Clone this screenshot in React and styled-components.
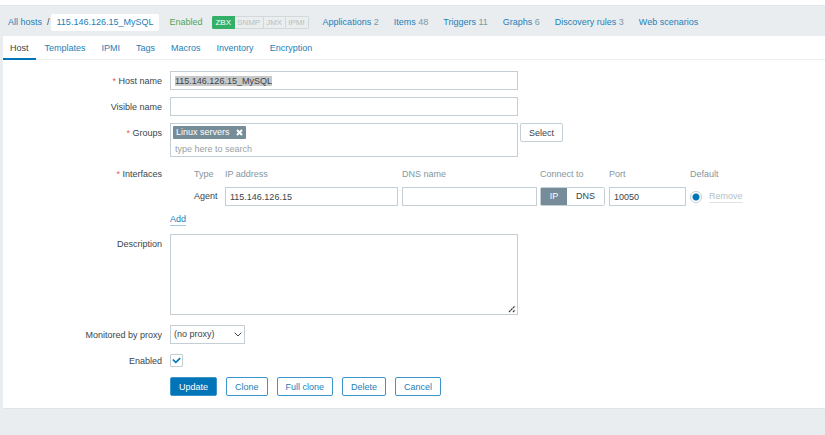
import { useEffect, useRef, useState } from "react";
import styled, { createGlobalStyle } from "styled-components";

const navLinks = [
  { name: "Applications", count: 2 },
  { name: "Items", count: 48 },
  { name: "Triggers", count: 11 },
  { name: "Graphs", count: 6 },
  { name: "Discovery rules", count: 3 },
  { name: "Web scenarios" },
];
const agents = ["ZBX", "SNMP", "JMX", "IPMI"];
const tabs = [
  "Host",
  "Templates",
  "IPMI",
  "Tags",
  "Macros",
  "Inventory",
  "Encryption",
];

const HostHeader = () => {
  return (
    <Header>
      <Link href="#hosts">All hosts</Link>
      <Slash>/</Slash>
      <CurrentHost href="#host">115.146.126.15_MySQL</CurrentHost>
      <HostStatus>Enabled</HostStatus>
      <Agents>
        {agents.map((agent) => (
          <Agent key={agent} $active={agent === "ZBX"}>
            {agent}
          </Agent>
        ))}
      </Agents>
      <HeaderNav>
        {navLinks.map((item) => (
          <span key={item.name}>
            <Link href="#nav">{item.name}</Link>
            {item.count && <Count> {item.count}</Count>}
          </span>
        ))}
      </HeaderNav>
    </Header>
  );
};

const Interfaces = () => {
  const [connect, setConnect] = useState("IP");
  return (
    <div>
      <InterfaceTable>
        <thead>
          <tr>
            <Th $width={31}>Type</Th>
            <Th $width={177}>IP address</Th>
            <Th $width={138}>DNS name</Th>
            <Th $width={69}>Connect to</Th>
            <Th $width={81}>Port</Th>
            <Th $width={60}>Default</Th>
          </tr>
        </thead>
        <tbody>
          <tr>
            <td>Agent</td>
            <td>
              <Input
                $width={173}
                aria-label="IP address"
                defaultValue="115.146.126.15"
              />
            </td>
            <td>
              <Input $width={135} aria-label="DNS name" />
            </td>
            <td>
              <Segments>
                {["IP", "DNS"].map((type) => (
                  <Segment key={type} $active={connect === type}>
                    <input
                      type="radio"
                      name="connect"
                      checked={connect === type}
                      onChange={() => setConnect(type)}
                    />
                    {type}
                  </Segment>
                ))}
              </Segments>
            </td>
            <td>
              <Input $width={77} aria-label="Port" defaultValue="10050" />
            </td>
            <td>
              <DefaultCell>
                <Radio
                  type="radio"
                  name="default"
                  aria-label="Default"
                  defaultChecked
                />
                <LinkButton type="button" disabled>
                  Remove
                </LinkButton>
              </DefaultCell>
            </td>
          </tr>
        </tbody>
      </InterfaceTable>
      <AddRow>
        <LinkButton type="button">Add</LinkButton>
      </AddRow>
    </div>
  );
};

const HostForm = () => {
  const hostName = useRef(null);
  useEffect(() => {
    hostName.current.focus();
    hostName.current.select();
  }, []);

  return (
    <Form onSubmit={(e) => e.preventDefault()}>
      <Label htmlFor="host" $required>
        Host name
      </Label>
      <Input id="host" ref={hostName} defaultValue="115.146.126.15_MySQL" />

      <Label htmlFor="visible">Visible name</Label>
      <Input id="visible" />

      <Label htmlFor="groups" $required>
        Groups
      </Label>
      <GroupsRow>
        <MultiSelect>
          <Chip>
            Linux servers
            <button type="button" aria-label="Remove Linux servers">
              <svg width="7" height="7" viewBox="0 0 7 7">
                <path d="M1 1L6 6M6 1L1 6" stroke="#fff" strokeWidth="2" />
              </svg>
            </button>
          </Chip>
          <input id="groups" placeholder="type here to search" />
        </MultiSelect>
        <Button type="button" $variant="grey">
          Select
        </Button>
      </GroupsRow>

      <Label as="div" $required>
        Interfaces
      </Label>
      <Interfaces />

      <Label htmlFor="description">Description</Label>
      <TextAreaWrap>
        <textarea id="description" />
        <svg width="8" height="8" viewBox="0 0 8 8">
          <path
            d="M1 7L7 1M5 7L7 5"
            stroke="#333"
            strokeWidth="1.2"
            strokeDasharray="2.2 0.5"
          />
        </svg>
      </TextAreaWrap>

      <Label htmlFor="proxy">Monitored by proxy</Label>
      <SelectWrap>
        <select id="proxy">
          <option>(no proxy)</option>
        </select>
        <svg width="8" height="5" viewBox="0 0 8 5">
          <path d="M0.7 0.7L4 4L7.3 0.7" fill="none" stroke="#3c4a52" />
        </svg>
      </SelectWrap>

      <Label htmlFor="enabled">Enabled</Label>
      <CheckWrap>
        <input id="enabled" type="checkbox" defaultChecked />
        <svg width="9" height="7" viewBox="0 0 9 7">
          <path
            d="M0.8 2.5L3.8 5.4L8.2 1.2"
            fill="none"
            stroke="#0275b8"
            strokeWidth="1.6"
          />
        </svg>
      </CheckWrap>

      <Actions>
        <Button type="submit" $variant="primary">
          Update
        </Button>
        <Button type="button">Clone</Button>
        <Button type="button">Full clone</Button>
        <Button type="button">Delete</Button>
        <Button type="button">Cancel</Button>
      </Actions>
    </Form>
  );
};

const App = () => {
  const [active, setActive] = useState("Host");
  return (
    <Page>
      <GlobalStyle />
      <HostHeader />
      <Panel>
        <Tabs>
          {tabs.map((tab) => (
            <Tab
              key={tab}
              type="button"
              $active={tab === active}
              onClick={() => setActive(tab)}
            >
              {tab}
            </Tab>
          ))}
        </Tabs>
        <HostForm />
      </Panel>
    </Page>
  );
};

const GlobalStyle = createGlobalStyle`
  * {
    box-sizing: border-box;
  }
  body {
    margin: 0;
    background: #e9edf0;
    color: #3a454b;
    font: 9px/11px "Liberation Sans", Arial, sans-serif;
  }
  button,
  input,
  select,
  textarea {
    font: inherit;
    color: inherit;
    margin: 0;
    outline: none;
  }
  ::selection {
    background: #c8c8c8;
    color: #3a454b;
  }
`;
const Page = styled.main`
  border-top: 5px solid #fff;
`;
const Header = styled.header`
  display: flex;
  align-items: center;
  height: 31px;
  padding: 3px 8px 0;
  border-top: 1px solid #e3e8eb;
  white-space: nowrap;
`;
const Link = styled.a`
  color: #2380b8;
  text-decoration: none;
`;
const Slash = styled.span`
  margin: 0 1px 0 5px;
`;
const CurrentHost = styled(Link)`
  padding: 3px 6px;
  background: #fff;
  border-radius: 2px;
`;
const HostStatus = styled.span`
  margin: 0 10px;
  color: #4ea556;
`;
const Agents = styled.div`
  display: flex;
  font-size: 8px;
  border-radius: 2px;
  overflow: hidden;
`;
const Agent = styled.span`
  padding: 0 3px 0 2px;
  border: 1px solid ${({ $active }) => ($active ? "#34af67" : "#d3d8da")};
  border-left-width: ${({ $active }) => ($active ? "1px" : "0")};
  background: ${({ $active }) => ($active ? "#34af67" : "#ebeeef")};
  color: ${({ $active }) => ($active ? "#fff" : "#b6bec2")};
`;
const HeaderNav = styled.nav`
  display: flex;
  gap: 15px;
  margin-left: 14px;
`;
const Count = styled.span`
  color: #8298a3;
`;
const Panel = styled.section`
  margin-left: 3px;
  background: #fff;
  border-bottom: 1px solid #dfe4e7;
`;
const Tabs = styled.div`
  display: flex;
  height: 24px;
  gap: 2px;
  border-bottom: 1px solid #ebeef0;
`;
const Tab = styled.button`
  height: 24px;
  padding: 2px 7px 0;
  border: 0;
  border-bottom: 2px solid ${({ $active }) => ($active ? "#0275b8" : "transparent")};
  background: none;
  color: ${({ $active }) => ($active ? "#3a454b" : "#2380b8")};
`;
const Form = styled.form`
  display: grid;
  grid-template-columns: 159px 1fr;
  column-gap: 8px;
  row-gap: 7px;
  padding: 11px 0 12px;
`;
const Label = styled.label`
  padding-top: 2px;
  line-height: 17px;
  text-align: right;
  &::before {
    content: "${({ $required }) => ($required ? "* " : "")}";
    color: #e45959;
  }
`;
const Input = styled.input`
  display: block;
  width: 100%;
  max-width: ${({ $width = 348 }) => $width}px;
  height: 19px;
  padding: 0 4px;
  border: 1px solid #c3cfd5;
  background: #fff;
`;
const GroupsRow = styled.div`
  display: flex;
  align-items: flex-start;
  gap: 2px;
`;
const MultiSelect = styled.div`
  width: 100%;
  max-width: 348px;
  height: 34px;
  padding: 2px;
  border: 1px solid #c3cfd5;
  input {
    display: block;
    width: 100%;
    height: 17px;
    padding: 2px 2px 0;
    border: 0;
    background: none;
  }
  input::placeholder {
    color: #9a9fa2;
  }
`;
const Chip = styled.span`
  display: flex;
  align-items: center;
  gap: 6px;
  width: fit-content;
  height: 13px;
  padding: 0 3px;
  border-radius: 1px;
  background: #768d99;
  color: #fff;
  button {
    display: flex;
    padding: 0;
    border: 0;
    background: none;
  }
`;
const Button = styled.button`
  height: 19px;
  padding: 2px 8px 0;
  border: 1px solid ${({ $variant }) => ($variant === "grey" ? "#c3cfd5" : "#3b95cb")};
  border-radius: 2px;
  background: ${({ $variant }) => ($variant === "primary" ? "#0275b8" : "#fff")};
  color: ${({ $variant }) =>
    $variant === "primary" ? "#fff" : $variant === "grey" ? "#3a454b" : "#2380b8"};
  white-space: nowrap;
`;
const InterfaceTable = styled.table`
  table-layout: fixed;
  width: 556px;
  margin-left: 24px;
  border-collapse: collapse;
  td {
    padding: 0;
  }
`;
const Th = styled.th`
  width: ${({ $width }) => $width}px;
  height: 23px;
  padding: 0 0 2px;
  font-weight: normal;
  text-align: left;
  color: #8496a0;
`;
const Segments = styled.div`
  display: flex;
  width: 65px;
  height: 19px;
  border: 1px solid #c3cfd5;
  border-radius: 2px;
`;
const Segment = styled.label`
  flex: auto;
  line-height: 17px;
  text-align: center;
  background: ${({ $active }) => ($active ? "#768d99" : "#fff")};
  color: ${({ $active }) => ($active ? "#fff" : "#3a454b")};
  input {
    position: absolute;
    opacity: 0;
  }
`;
const DefaultCell = styled.div`
  display: flex;
  align-items: center;
  gap: 7px;
`;
const Radio = styled.input`
  appearance: none;
  width: 12px;
  height: 12px;
  border: 1px solid #c3cfd5;
  border-radius: 50%;
  background: radial-gradient(circle, #0275b8 3px, #fff 4px);
`;
const LinkButton = styled.button`
  padding: 0;
  border: 0;
  border-bottom: 1px solid #a3cbe3;
  background: none;
  color: #2380b8;
  &:disabled {
    color: #b3bfc5;
    border-color: #dde3e6;
  }
`;
const AddRow = styled.div`
  display: flex;
  padding: 8px 0 1px;
`;
const TextAreaWrap = styled.div`
  position: relative;
  max-width: 348px;
  margin-bottom: 3px;
  textarea {
    display: block;
    width: 100%;
    height: 81px;
    padding: 4px;
    border: 1px solid #c3cfd5;
    resize: none;
  }
  svg {
    position: absolute;
    right: 2px;
    bottom: 2px;
    pointer-events: none;
  }
`;
const SelectWrap = styled.div`
  position: relative;
  width: 75px;
  select {
    display: block;
    appearance: none;
    width: 100%;
    height: 19px;
    padding: 0 3px;
    border: 1px solid #c3cfd5;
    border-radius: 0;
    background: #fff;
  }
  svg {
    position: absolute;
    right: 3px;
    top: 7px;
    pointer-events: none;
  }
`;
const CheckWrap = styled.div`
  display: grid;
  align-items: center;
  justify-items: center;
  width: 13px;
  height: 19px;
  input,
  svg {
    grid-area: 1 / 1;
  }
  input {
    appearance: none;
    width: 13px;
    height: 13px;
    border: 1px solid #c3cfd5;
    border-radius: 1px;
  }
  input:not(:checked) + svg {
    visibility: hidden;
  }
  svg {
    pointer-events: none;
  }
`;
const Actions = styled.div`
  display: flex;
  grid-column: 2;
  gap: 9px;
`;

export default App;
